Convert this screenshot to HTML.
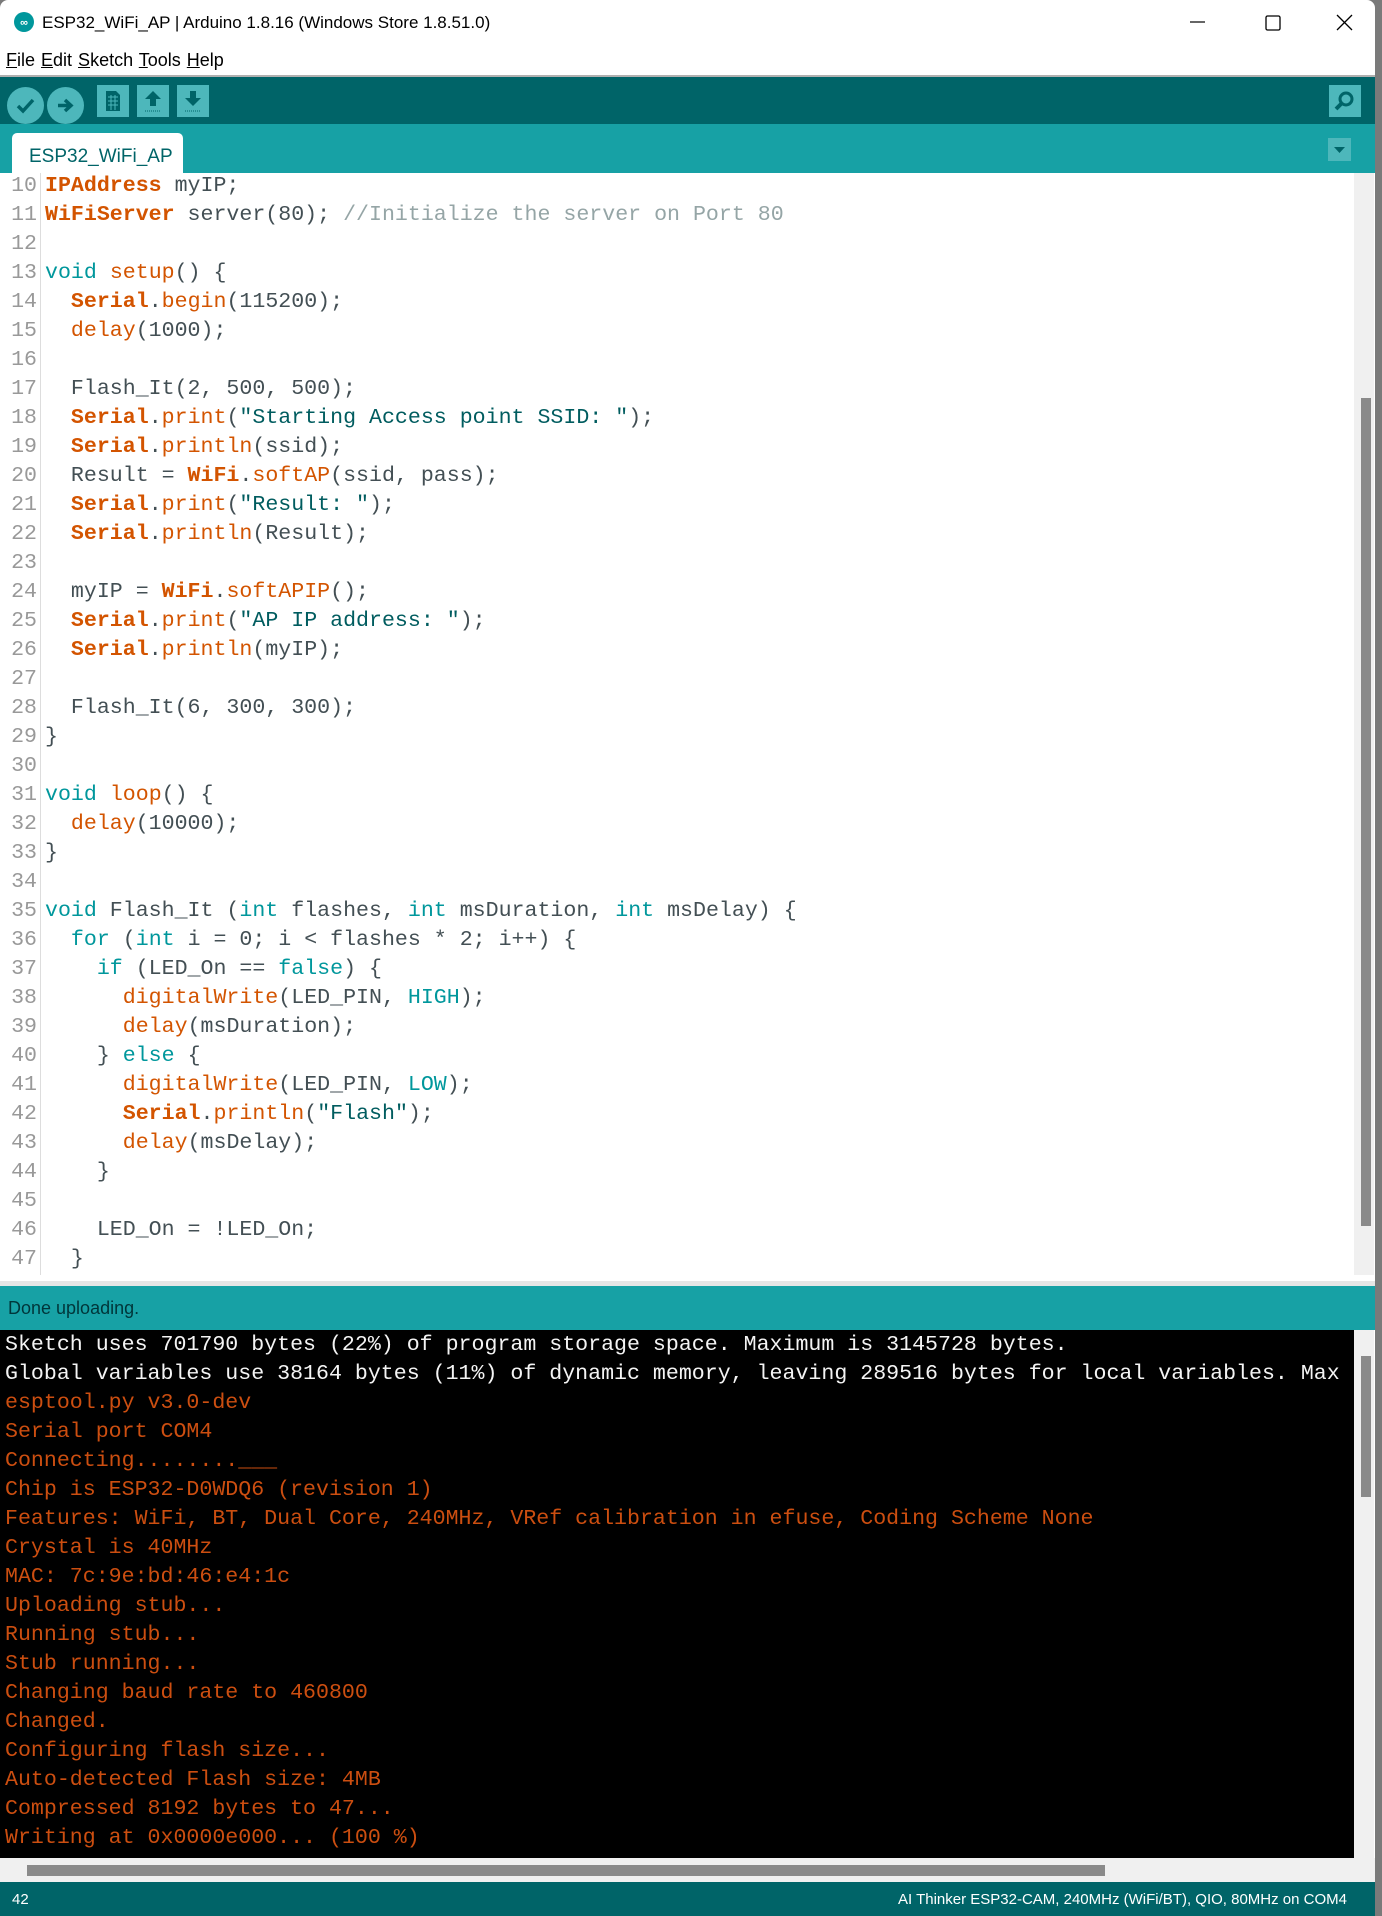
<!DOCTYPE html>
<html><head><meta charset="utf-8"><style>
*{margin:0;padding:0;box-sizing:border-box}
body{width:1382px;height:1916px;overflow:hidden;background:#7a7a7a;position:relative;font-family:"Liberation Sans",sans-serif}
.win{position:absolute;left:0;top:0;width:1375px;height:1916px;background:#fff;border-radius:8px 8px 0 0;overflow:hidden}
.title{position:absolute;left:42px;top:13px;font-size:17px;color:#000}
.menu{position:absolute;left:6px;top:50px;font-size:18px;color:#000;word-spacing:1px}
.menu u{text-decoration:underline}
.tb{position:absolute;left:0;top:75px;width:1375px;height:49px;background:#006468;border-top:2px solid #b0b0b0}
.tabs{position:absolute;left:0;top:124px;width:1375px;height:49px;background:#17a1a5}
.circ{position:absolute;top:10px;width:37px;height:37px;border-radius:50%;background:#4db7bb}
.sq{position:absolute;top:8px;width:32px;height:32px;background:#4db7bb}
.tab{position:absolute;left:12px;top:9px;width:171px;height:40px;background:#fff;border-radius:5px 5px 0 0;color:#006468;font-size:19px;padding:13px 0 0 17px}
.ed{position:absolute;left:0;top:173px;width:1354px;height:1102px;background:#fff}
.gut{position:absolute;left:0;top:0;width:41px;height:1102px;border-right:1px solid #ddd}
pre{font-family:"Liberation Mono",monospace;font-size:21.6px;line-height:29px}
.nums{position:absolute;left:0;top:-1px;width:37px;text-align:right;color:#999}
.code{position:absolute;left:45px;top:-1px;color:#434f54}
.k{color:#D35400;font-weight:bold}.f{color:#D35400}.t{color:#00979C}.s{color:#005C5F}.c{color:#95A5A6}
.vs{position:absolute;left:1354px;top:173px;width:20px;height:1102px;background:#f0f0f0}
.status{position:absolute;left:0;top:1281px;width:1375px;height:49px;background:#17a1a5;border-top:5px solid #e6e6e6}
.con{position:absolute;left:0;top:1330px;width:1354px;height:528px;background:#000}
.con pre{position:absolute;left:5px;top:1px;color:#f4f4f4;white-space:pre}
.o{color:#CC4E10}
.bot{position:absolute;left:0;top:1882px;width:1375px;height:34px;background:#006468;color:#fff;font-size:15px}
</style></head><body>
<div class="win">
<svg style="position:absolute;left:14px;top:12px" width="20" height="20" viewBox="0 0 20 20"><circle cx="10" cy="10" r="10" fill="#00979c"/><text x="10" y="14" font-size="11" fill="#fff" text-anchor="middle" font-family="Liberation Sans" font-weight="bold">∞</text></svg>
<div class="title">ESP32_WiFi_AP | Arduino 1.8.16 (Windows Store 1.8.51.0)</div>
<svg style="position:absolute;left:1190px;top:14px" width="170" height="20"><line x1="0" y1="8" x2="15" y2="8" stroke="#000" stroke-width="1.2"/><rect x="76" y="2" width="14" height="14" rx="1.5" fill="none" stroke="#000" stroke-width="1.3"/><path d="M147 1 L162 16 M162 1 L147 16" stroke="#000" stroke-width="1.3"/></svg>
<div class="menu"><u>F</u>ile <u>E</u>dit <u>S</u>ketch <u>T</u>ools <u>H</u>elp</div>
<div class="tb">
<div class="circ" style="left:7px"><svg width="37" height="37"><path d="M11 19 L16 24 L26 13" fill="none" stroke="#006468" stroke-width="3.5"/></svg></div>
<div class="circ" style="left:47px"><svg width="37" height="37"><path d="M11 18.5 H22 M18 13 L24 18.5 L18 24" fill="none" stroke="#006468" stroke-width="3.5"/></svg></div>
<div class="sq" style="left:97px"><svg width="32" height="32"><path d="M9 6 H19 L23 10 V26 H9 Z" fill="#006468"/><path d="M11 12 H21 M11 16 H21 M11 20 H21 M14 10 V25 M18 10 V25" stroke="#4db7bb" stroke-width="1"/></svg></div>
<div class="sq" style="left:137px"><svg width="32" height="32"><path d="M16 6 L24 14 H19 V21 H13 V14 H8 Z" fill="#006468"/><path d="M8 26 H24" stroke="#006468" stroke-dasharray="1 1"/></svg></div>
<div class="sq" style="left:177px"><svg width="32" height="32"><path d="M16 21 L24 13 H19 V6 H13 V13 H8 Z" fill="#006468"/><path d="M8 26 H24" stroke="#006468" stroke-dasharray="1 1"/></svg></div>
<div class="sq" style="left:1329px;top:8px"><svg width="32" height="32"><circle cx="17" cy="14" r="6" fill="none" stroke="#006468" stroke-width="3"/><path d="M12 19 L7 24" stroke="#006468" stroke-width="4"/></svg></div>
</div>
<div class="tabs"><div class="tab">ESP32_WiFi_AP</div>
<div style="position:absolute;left:1328px;top:14px;width:23px;height:23px;background:#4db7bb"><svg width="23" height="23"><path d="M6 9 H17 L11.5 15 Z" fill="#006468"/></svg></div></div>
<div class="ed"><div class="gut"></div>
<pre class="nums">10
11
12
13
14
15
16
17
18
19
20
21
22
23
24
25
26
27
28
29
30
31
32
33
34
35
36
37
38
39
40
41
42
43
44
45
46
47</pre>
<pre class="code"><span class="k">IPAddress</span> myIP;
<span class="k">WiFiServer</span> server(80); <span class="c">//Initialize the server on Port 80</span>

<span class="t">void</span> <span class="f">setup</span>() {
  <span class="k">Serial</span>.<span class="f">begin</span>(115200);
  <span class="f">delay</span>(1000);

  Flash_It(2, 500, 500);
  <span class="k">Serial</span>.<span class="f">print</span>(<span class="s">"Starting Access point SSID: "</span>);
  <span class="k">Serial</span>.<span class="f">println</span>(ssid);
  Result = <span class="k">WiFi</span>.<span class="f">softAP</span>(ssid, pass);
  <span class="k">Serial</span>.<span class="f">print</span>(<span class="s">"Result: "</span>);
  <span class="k">Serial</span>.<span class="f">println</span>(Result);

  myIP = <span class="k">WiFi</span>.<span class="f">softAPIP</span>();
  <span class="k">Serial</span>.<span class="f">print</span>(<span class="s">"AP IP address: "</span>);
  <span class="k">Serial</span>.<span class="f">println</span>(myIP);

  Flash_It(6, 300, 300);
}

<span class="t">void</span> <span class="f">loop</span>() {
  <span class="f">delay</span>(10000);
}

<span class="t">void</span> Flash_It (<span class="t">int</span> flashes, <span class="t">int</span> msDuration, <span class="t">int</span> msDelay) {
  <span class="t">for</span> (<span class="t">int</span> i = 0; i &lt; flashes * 2; i++) {
    <span class="t">if</span> (LED_On == <span class="t">false</span>) {
      <span class="f">digitalWrite</span>(LED_PIN, <span class="t">HIGH</span>);
      <span class="f">delay</span>(msDuration);
    } <span class="t">else</span> {
      <span class="f">digitalWrite</span>(LED_PIN, <span class="t">LOW</span>);
      <span class="k">Serial</span>.<span class="f">println</span>(<span class="s">"Flash"</span>);
      <span class="f">delay</span>(msDelay);
    }

    LED_On = !LED_On;
  }</pre></div>
<div class="vs"><div style="position:absolute;left:7px;top:225px;width:10px;height:828px;background:#8a8a8a"></div></div>
<div class="status"><div style="position:absolute;left:8px;top:12px;font-size:18px;color:#00363a">Done uploading.</div></div>
<div class="con"><pre>Sketch uses 701790 bytes (22%) of program storage space. Maximum is 3145728 bytes.
Global variables use 38164 bytes (11%) of dynamic memory, leaving 289516 bytes for local variables. Max
<span class="o">esptool.py v3.0-dev
Serial port COM4
Connecting........___
Chip is ESP32-D0WDQ6 (revision 1)
Features: WiFi, BT, Dual Core, 240MHz, VRef calibration in efuse, Coding Scheme None
Crystal is 40MHz
MAC: 7c:9e:bd:46:e4:1c
Uploading stub...
Running stub...
Stub running...
Changing baud rate to 460800
Changed.
Configuring flash size...
Auto-detected Flash size: 4MB
Compressed 8192 bytes to 47...
Writing at 0x0000e000... (100 %)</span></pre></div>
<div style="position:absolute;left:1354px;top:1330px;width:20px;height:528px;background:#f0f0f0"><div style="position:absolute;left:7px;top:26px;width:10px;height:141px;background:#8a8a8a"></div></div>
<div style="position:absolute;left:0;top:1858px;width:1375px;height:24px;background:#f0f0f0"><div style="position:absolute;left:27px;top:7px;width:1078px;height:11px;background:#8a8a8a"></div></div>
<div class="bot"><span style="position:absolute;left:12px;top:9px">42</span><span style="position:absolute;right:28px;top:9px">AI Thinker ESP32-CAM, 240MHz (WiFi/BT), QIO, 80MHz on COM4</span></div>
</div>
</body></html>
